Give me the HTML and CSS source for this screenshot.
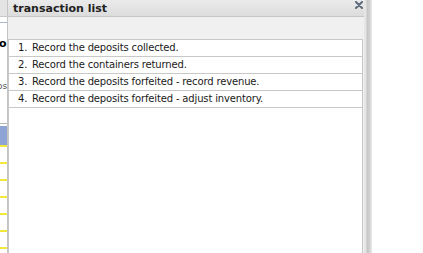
FILE: index.html
```html
<!DOCTYPE html>
<html lang="en">
<head>
    <meta charset="UTF-8">
    <title>transaction list</title>
    <link rel="stylesheet" href="styles.css">
</head>
<body>
    <div class="screen">
        <div class="page-strip">
            <div class="strip-tab"></div>
            <div class="strip-rule"></div>
            <div class="strip-bold">o</div>
            <div class="strip-text">os</div>
            <div class="strip-rule low"></div>
            <div class="strip-blue"></div>
            <div class="strip-lines">
                <span></span><span></span><span></span><span></span><span></span><span></span>
            </div>
        </div>

        <div class="dialog">
            <div class="dialog-title">
                <span>transaction list</span>
                <svg class="close" width="8" height="8" viewBox="0 0 8 8">
                    <path d="M1 1 L7 7 M7 1 L1 7" stroke="#5d6b7a" stroke-width="2" stroke-linecap="round"/>
                </svg>
            </div>
            <div class="dialog-body">
                <ol class="txn-list">
                    <li><span class="num">1.</span>Record the deposits collected.</li>
                    <li><span class="num">2.</span>Record the containers returned.</li>
                    <li><span class="num">3.</span>Record the deposits forfeited - record revenue.</li>
                    <li><span class="num">4.</span>Record the deposits forfeited - adjust inventory.</li>
                </ol>
            </div>
        </div>
        <div class="dialog-shadow"></div>
    </div>
</body>
</html>
```

FILE: styles.css
```css
body {
    margin: 0;
    background: #fff;
    font-family: "DejaVu Sans", Verdana, sans-serif;
}
.screen {
    display: flex;
    height: 253px;
    overflow: hidden;
}
.page-strip {
    width: 7px;
    display: flex;
    flex-direction: column;
    overflow: hidden;
    background: #fff;
}
.strip-tab {
    height: 16px;
    background: #e4e4e4;
    border-bottom: 1px solid #c8c8c8;
}
.strip-rule {
    height: 1px;
    background: #a9b6c8;
    margin-top: 5px;
}
.strip-rule.low {
    margin-top: 32px;
    background: #b8b8b8;
}
.strip-bold {
    font-size: 11px;
    font-weight: bold;
    margin: 14px 0 0 -1px;
    line-height: 14px;
}
.strip-text {
    font-size: 9px;
    color: #555;
    margin: 30px 0 0 -3px;
    line-height: 10px;
}
.strip-blue {
    height: 19px;
    margin-top: 2px;
    background: #8da4d4;
    border-bottom: 2px solid #f2ea3a;
}
.strip-lines {
    display: flex;
    flex-direction: column;
    gap: 15px;
    padding-top: 15px;
}
.strip-lines span {
    height: 2px;
    background: #f2ea3a;
}
.dialog {
    width: 356px;
    display: flex;
    flex-direction: column;
    background: #f0f0f0;
    border-left: 1px solid #c4c4c4;
}
.dialog-title {
    height: 16px;
    display: flex;
    justify-content: space-between;
    align-items: center;
    padding: 0 1px 0 5px;
    background: linear-gradient(#ebebeb, #dcdcdc);
    border-bottom: 1px solid #c6c6c6;
    font-size: 11px;
    font-weight: bold;
    color: #222;
}
.close {
    align-self: flex-start;
    margin-top: 1px;
}
.dialog-body {
    flex: 1;
    padding: 22px 1px 0 0;
}
.txn-list {
    list-style: none;
    margin: 0;
    padding: 0;
    height: 100%;
    background: #fff;
    border: 1px solid #c8c8c8;
    border-bottom: none;
}
.txn-list li {
    height: 16px;
    line-height: 16px;
    border-bottom: 1px solid #c8c8c8;
    font-size: 10px;
    letter-spacing: -0.15px;
    color: #1a1a1a;
    padding-left: 9px;
}
.num {
    display: inline-block;
    width: 14px;
}
.dialog-shadow {
    width: 8px;
    background: linear-gradient(90deg, #e6e6e6 0, #e6e6e6 2px, #c4c4c4 3px, #d4d4d4 6px, #ececec 8px);
}
```
